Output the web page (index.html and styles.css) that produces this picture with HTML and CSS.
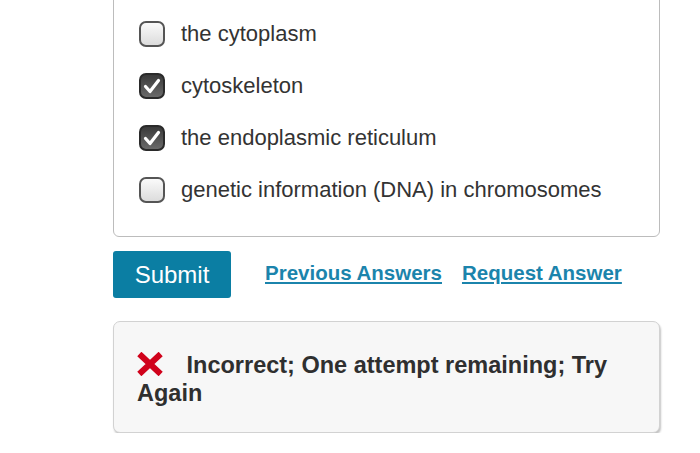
FILE: index.html
```html
<!DOCTYPE html>
<html lang="en">
<head>
  <meta charset="UTF-8">
  <meta name="viewport" content="width=device-width, initial-scale=1.0">
  <title>Multiple choice</title>
  <link rel="stylesheet" href="styles.css">
</head>
<body>
  <div class="question">
    <ul class="choices">
      <li class="choice">
        <span class="box"></span>
        <span class="label">the cytoplasm</span>
      </li>
      <li class="choice">
        <span class="box checked">
          <svg viewBox="0 0 26 26" width="26" height="26"><polyline points="6.5,13.5 11,18.5 19.5,7.5" fill="none" stroke="#fff" stroke-width="3.2" stroke-linecap="round" stroke-linejoin="round"/></svg>
        </span>
        <span class="label">cytoskeleton</span>
      </li>
      <li class="choice">
        <span class="box checked">
          <svg viewBox="0 0 26 26" width="26" height="26"><polyline points="6.5,13.5 11,18.5 19.5,7.5" fill="none" stroke="#fff" stroke-width="3.2" stroke-linecap="round" stroke-linejoin="round"/></svg>
        </span>
        <span class="label">the endoplasmic reticulum</span>
      </li>
      <li class="choice">
        <span class="box"></span>
        <span class="label">genetic information (DNA) in chromosomes</span>
      </li>
    </ul>

    <div class="actions">
      <button class="submit">Submit</button>
      <a href="#" class="link">Previous Answers</a>
      <a href="#" class="link">Request Answer</a>
    </div>

    <div class="feedback">
      <svg class="wrong" viewBox="0 0 26 24" width="26" height="24"><path d="M4.5 4 L21.5 20 M21.5 4 L4.5 20" stroke="#d0021b" stroke-width="6" stroke-linecap="square"/></svg>
      Incorrect; One attempt remaining; Try Again
    </div>
  </div>
</body>
</html>
```

FILE: styles.css
```css
body {
  margin: 0;
  background: #fff;
  font-family: "Liberation Sans", Arial, sans-serif;
  color: #333;
}

.question {
  width: 547px;
  margin-left: 113px;
}

.choices {
  list-style: none;
  margin: -20px 0 0;
  padding: 27px 0 20px;
  border: 1px solid #bcbcbc;
  border-radius: 6px;
}

.choice {
  display: flex;
  align-items: center;
  height: 52px;
  padding-left: 25px;
  gap: 16px;
  font-size: 22px;
}

.box {
  width: 22px;
  height: 22px;
  border: 2px solid #555;
  border-radius: 7px;
  background: linear-gradient(#fafafa, #dcdcdc);
  display: flex;
  align-items: center;
  justify-content: center;
}

.box svg {
  flex: none;
}

.box.checked {
  background: linear-gradient(#3a3a3a, #6a6a6a);
  border-color: #2a2a2a;
}

.actions {
  display: flex;
  align-items: center;
  margin-top: 14px;
}

.submit {
  width: 118px;
  height: 47px;
  background: #0b7ea3;
  color: #fff;
  border: none;
  border-radius: 3px;
  font-family: "Liberation Sans", Arial, sans-serif;
  font-size: 24px;
  padding: 0;
  margin-right: 34px;
}

.link {
  color: #1b84ac;
  font-weight: bold;
  font-size: 20.5px;
  margin-right: 20px;
  margin-bottom: 4px;
  text-decoration: underline;
}

.feedback {
  margin-top: 23px;
  background: #f7f7f7;
  border: 1px solid #d2d2d2;
  border-radius: 7px;
  box-shadow: 1px 2px 2px #c4c4c4;
  padding: 29px 23px 25px;
  font-size: 23.5px;
  font-weight: bold;
  line-height: 28px;
  color: #2f2f2f;
}

.wrong {
  vertical-align: -3px;
  margin-right: 17px;
}
```
